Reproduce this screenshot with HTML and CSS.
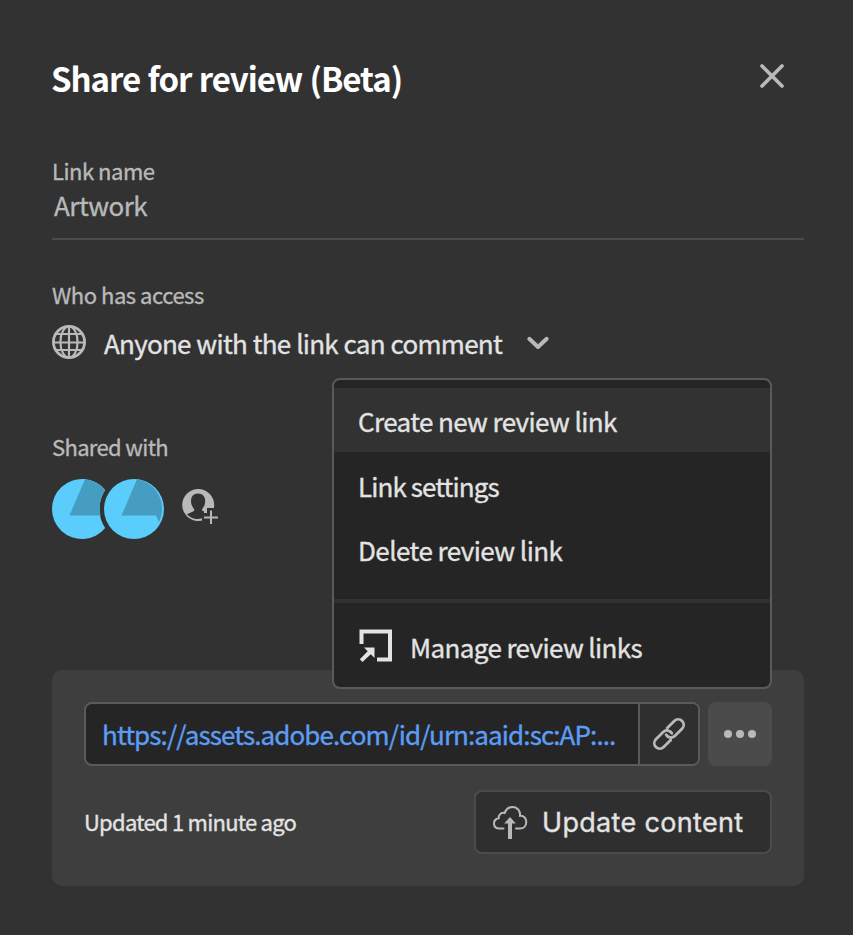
FILE: index.html
```html
<!DOCTYPE html>
<html lang="en">
<head>
<meta charset="utf-8">
<title>Share for review</title>
<link rel="stylesheet" href="styles.css">
</head>
<body>
<main class="dialog">
  <header class="header">
    <h1 class="title">Share for review (Beta)</h1>
    <button class="icon-button close" aria-label="Close">
      <svg width="26" height="26" viewBox="0 0 26 26"><path d="M3 3L23 23M23 3L3 23"/></svg>
    </button>
  </header>

  <section class="link-name">
    <div class="label">Link name</div>
    <div class="name-value">Artwork</div>
  </section>

  <section class="access">
    <div class="label">Who has access</div>
    <div class="access-row">
      <svg class="globe" width="34" height="34" viewBox="0 0 34 34">
        <circle cx="17" cy="17" r="15.600"/>
        <ellipse cx="17" cy="17" rx="8.600" ry="15.600"/>
        <path d="M17 1V33M1 17.500H33M4 9H30M4 25H30"/>
      </svg>
      <span class="access-text">Anyone with the link can comment</span>
      <svg class="chevron" width="22" height="14" viewBox="0 0 22 14"><path d="M2.300 2.800L11 11L19.700 2.800"/></svg>
    </div>
  </section>

  <section class="shared">
    <div class="label shared-label">Shared with</div>
    <div class="people">
      <svg class="avatar" width="52" height="60" viewBox="0 0 52 60">
        <path fill="#5acdfc" d="M53.200 11A30 30 0 1 0 53.200 49A34 34 0 0 1 53.200 11Z"/>
        <path fill="#459ec2" d="M33 .2A30 30 0 0 1 53.200 11A34 34 0 0 0 48.600 36.500H17.500Z"/>
      </svg>
      <svg class="avatar" width="60" height="60" viewBox="0 0 60 60">
        <circle cx="30" cy="30" r="30" fill="#5acdfc"/>
        <path fill="#459ec2" d="M33 .2A30 30 0 0 1 55 43L52 36.500H17.500Z"/>
      </svg>
      <svg class="add-person" width="37" height="37" viewBox="0 0 37 37">
        <defs><mask id="cut"><rect width="37" height="37" fill="#fff"/>
          <path fill="#000" d="M16 4.500C11.500 4.500 9 7.600 9 12.200C9 15.800 10.700 18.200 12 20C12.600 21.200 12.400 22 11 22.600L5 25.200A14 14 0 0 0 16 30Q19.500 30 22 28V22.400C20 21.900 19.600 21 20.400 19.700C21.700 18 23.200 15.600 23.200 12.200C23.200 7.600 20.500 4.500 16 4.500Z"/>
          <path stroke="#000" stroke-width="8" d="M29 19V37M20 28H37"/></mask></defs>
        <circle cx="16.200" cy="16" r="16" mask="url(#cut)" fill="#b9b9b9"/>
        <path stroke="#b9b9b9" stroke-width="2" d="M29 21.500V35M22 28.500H36"/>
      </svg>
    </div>
  </section>

  <section class="card">
    <div class="link-row">
      <div class="url-field">
        <div class="url">https://assets.adobe.com/id/urn:aaid:sc:AP:...</div>
        <button class="icon-button copy" aria-label="Copy link">
          <svg width="34" height="34" viewBox="0 0 34 34"><g transform="rotate(-45 17 17)">
            <path d="M14 22.500H4A5.500 5.500 0 0 1 4 11.500H15A5.500 5.500 0 0 1 19.500 18.500"/>
            <path d="M20 11.500H30A5.500 5.500 0 0 1 30 22.500H19A5.500 5.500 0 0 1 14.500 15.500"/>
          </g></svg>
        </button>
      </div>
      <button class="icon-button more" aria-label="More"><i></i><i></i><i></i></button>
    </div>
    <div class="status-row">
      <span class="updated">Updated 1 minute ago</span>
      <button class="update">
        <svg width="36" height="36" viewBox="0 0 36 36">
          <path class="cloud" d="M11.500 24.500H7.500C4 24.500 2 22.500 2 19.500C2 16.500 4 14.800 6.700 14.300C6.300 10.500 9.500 8.300 12.700 9C14 5 17 3 20.500 3C25.500 3 28.500 7 28 11.800C32 11.500 34.300 14.500 34.300 18C34.300 22 31.500 24.500 28 24.500H24"/>
          <path class="arrow" d="M18 13L23.800 19.500H20V34.500Q20 35 19.500 35H16.500Q16 35 16 34.500V19.500H12.200Z"/>
        </svg>
        <span class="update-text">Update content</span>
      </button>
    </div>

    <div class="menu">
      <div class="item active">Create new review link</div>
      <div class="item settings">Link settings</div>
      <div class="item delete">Delete review link</div>
      <div class="divider"></div>
      <div class="item manage">
        <svg width="34" height="34" viewBox="0 0 34 34">
          <path class="frame" d="M2.500 15V2.500H31V30.500H18"/>
          <path class="pointer" d="M5 18.500H15.500V29L11.800 25.300L3.500 33L.8 30.300L8.700 22.200Z"/>
        </svg>
        <span>Manage review links</span>
      </div>
    </div>
  </section>
</main>
</body>
</html>
```

FILE: styles.css
```css
* { box-sizing: border-box; }
body {
  margin: 0;
  background: #323232;
  color: #e3e3e3;
  font-family: "Noto Sans CJK SC", "Noto Sans", sans-serif;
  font-size: 26px;
  line-height: 36px;
  white-space: nowrap;
  -webkit-text-stroke: .35px currentColor;
}
button { border: 0; padding: 0; margin: 0; font: inherit; color: inherit; }
svg { display: block; flex: none; fill: none; overflow: visible; }
.dialog { height: 935px; padding: 57px 49px 0 52px; overflow: hidden; }
.header { display: flex; height: 98px; justify-content: space-between; align-items: flex-start; }
.title { margin: 1px 0 0 -1px; font-size: 33px; line-height: 40px; font-weight: 700; letter-spacing: -1.05px; word-spacing: 1px; color: #fff; -webkit-text-stroke: 0; }
.icon-button { display: flex; align-items: center; justify-content: center; background: none; }
.close { margin: 6px 19px 0 0; }
.close path { stroke: #b9b9b9; stroke-width: 3.6; stroke-linecap: round; }
.label { font-size: 22px; line-height: 30px; letter-spacing: -.48px; color: #b9b9b9; }
.shared-label { letter-spacing: -.66px; }
.link-name { height: 85px; border-bottom: 2px solid #4b4b4b; }
.name-value { padding: 2px 0 0 2px; letter-spacing: -.5px; color: #b9b9b9; }
.access { margin-top: 39px; height: 152px; }
.access-row { display: flex; align-items: center; margin-top: 16px; height: 36px; }
.access-text { width: 399px; margin-left: 18px; letter-spacing: -.74px; word-spacing: .6px; }
.globe { margin-top: -2px; }
.globe * { stroke: #b9b9b9; stroke-width: 2.2; }
.globe circle { stroke-width: 2.8; }
.chevron { margin-left: 24px; }
.chevron path { stroke: #b9b9b9; stroke-width: 4; stroke-linecap: round; stroke-linejoin: round; }
.shared { height: 239px; }
.people { display: flex; margin-top: 18px; }
.add-person { margin: 10px 0 0 18px; }
.card { position: relative; height: 216px; padding: 32px; border-radius: 10px; background: #3e3e3e; }
.link-row { display: flex; gap: 8px; }
.url-field { display: flex; width: 616px; height: 64px; border: 2px solid #5a5a5a; border-radius: 8px; overflow: hidden; background: #252525; }
.url { flex: none; width: 552px; padding: 12px 0 0 16px; letter-spacing: -.9px; color: #5c9df5; }
.copy { flex: none; width: 60px; border-left: 2px solid #5a5a5a; background: #2f2f2f; }
.copy path { stroke: #b9b9b9; stroke-width: 2.8; stroke-linecap: round; }
.more { width: 64px; height: 64px; gap: 4px; border-radius: 8px; background: #4b4b4b; }
.more i { width: 8px; height: 8px; border-radius: 50%; background: #b9b9b9; }
.status-row { display: flex; justify-content: space-between; align-items: center; margin-top: 24px; }
.updated { padding-bottom: 2px; font-size: 22px; letter-spacing: -.75px; }
.update { display: flex; align-items: center; width: 298px; height: 64px; padding-left: 16px; border: 2px solid #4b4b4b; border-radius: 8px; background: #2f2f2f; font-family: Inter, sans-serif; font-size: 27px; letter-spacing: .32px; }
.update-text { margin-left: 14px; padding-top: 2px; }
.cloud { stroke: #b9b9b9; stroke-width: 2; stroke-linecap: round; }
.arrow { fill: #b9b9b9; }
.menu { position: absolute; left: 280px; top: -292px; width: 440px; height: 311px; padding-top: 8px; border: 2px solid #5a5a5a; border-radius: 8px; background: #252525; letter-spacing: -.62px; }
.item { display: flex; align-items: center; height: 64px; padding: 1px 0 0 24px; }
.settings { height: 65px; padding-top: 2px; letter-spacing: -.9px; }
.active { background: #323232; }
.delete { letter-spacing: -.56px; }
.divider { height: 4px; margin-top: 18px; background: #323232; }
.manage { margin-top: 11px; }
.manage svg { margin: -1px 17px 0 1px; }
.frame { stroke: #e3e3e3; stroke-width: 4; }
.pointer { fill: #e3e3e3; }
```
